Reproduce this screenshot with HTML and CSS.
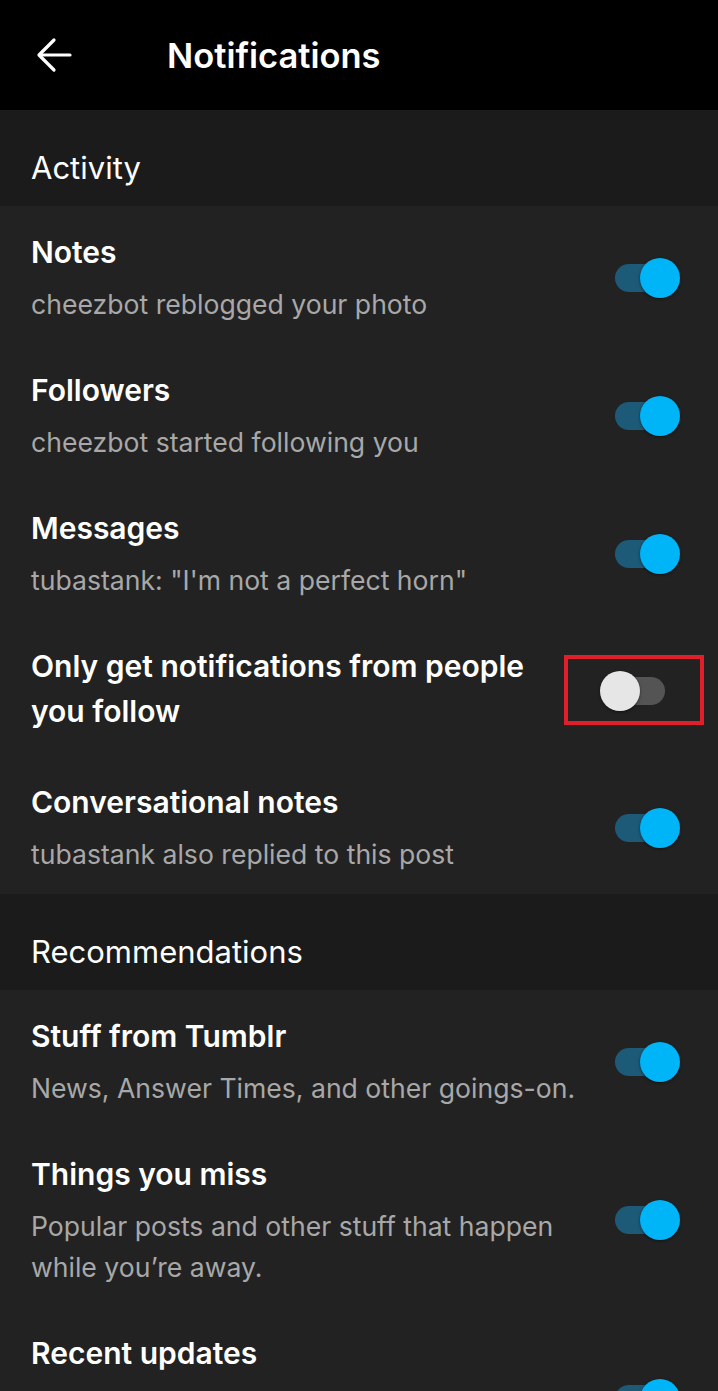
FILE: index.html
```html
<!DOCTYPE html>
<html lang="en">
<head>
  <meta charset="UTF-8">
  <meta name="viewport" content="width=device-width, initial-scale=1.0">
  <title>Notifications</title>
  <link rel="stylesheet" href="styles.css">
</head>
<body>
  <header class="topbar">
    <button class="back-btn" aria-label="Back">
      <svg width="36" height="36" viewBox="0 0 36 36" fill="none" stroke="#fff" stroke-width="3.2" stroke-linecap="round" stroke-linejoin="round">
        <path d="M34 18H4"/>
        <path d="M18 3L3 18l15 15"/>
      </svg>
    </button>
    <h1>Notifications</h1>
  </header>

  <section class="group">
    <h2 class="group-title">Activity</h2>
    <div class="rows">
      <div class="row">
        <div class="row-text">
          <h3>Notes</h3>
          <p>cheezbot reblogged your photo</p>
        </div>
        <span class="switch on"><span class="knob"></span></span>
      </div>
      <div class="row">
        <div class="row-text">
          <h3>Followers</h3>
          <p>cheezbot started following you</p>
        </div>
        <span class="switch on"><span class="knob"></span></span>
      </div>
      <div class="row">
        <div class="row-text">
          <h3>Messages</h3>
          <p>tubastank: "I'm not a perfect horn"</p>
        </div>
        <span class="switch on"><span class="knob"></span></span>
      </div>
      <div class="row">
        <div class="row-text">
          <h3>Only get notifications from people you follow</h3>
        </div>
        <span class="switch"><span class="knob"></span><span class="highlight"></span></span>
      </div>
      <div class="row">
        <div class="row-text">
          <h3>Conversational notes</h3>
          <p>tubastank also replied to this post</p>
        </div>
        <span class="switch on"><span class="knob"></span></span>
      </div>
    </div>
  </section>

  <section class="group">
    <h2 class="group-title">Recommendations</h2>
    <div class="rows">
      <div class="row">
        <div class="row-text">
          <h3>Stuff from Tumblr</h3>
          <p>News, Answer Times, and other goings-on.</p>
        </div>
        <span class="switch on"><span class="knob"></span></span>
      </div>
      <div class="row">
        <div class="row-text">
          <h3>Things you miss</h3>
          <p>Popular posts and other stuff that happen while you’re away.</p>
        </div>
        <span class="switch on"><span class="knob"></span></span>
      </div>
      <div class="row">
        <div class="row-text">
          <h3>Recent updates</h3>
          <p>Posts from blogs you follow and things you might like.</p>
        </div>
        <span class="switch on"><span class="knob"></span></span>
      </div>
    </div>
  </section>
</body>
</html>
```

FILE: styles.css
```css
body {
  margin: 0;
  font-family: Inter, "Noto Sans", sans-serif;
  background: #222;
  color: #fff;
}

.topbar {
  background: #000;
  height: 110px;
  display: flex;
  align-items: center;
}

.back-btn {
  background: none;
  border: none;
  padding: 0;
  margin-left: 36px;
  width: 36px;
  height: 36px;
  display: flex;
}

.topbar h1 {
  margin: 0 0 0 95px;
  font-size: 34.5px;
  font-weight: 600;
}

.group-title {
  margin: 0;
  background: #1b1b1b;
  padding: 40px 31px 20px;
  font-size: 31px;
  line-height: 36px;
  font-weight: 400;
}

.rows {
  background: #222;
}

.row {
  display: flex;
  align-items: center;
  justify-content: space-between;
  padding: 24px 38px 19px 31px;
}

.row-text {
  flex: 1;
  max-width: 545px;
}

.row h3 {
  margin: 0;
  font-size: 30px;
  line-height: 45px;
  font-weight: 600;
}

/* rows with no description line sit a bit taller */
.row h3:only-child {
  margin-bottom: 3px;
}

.row p {
  margin: 9px 0 0;
  font-size: 26.6px;
  line-height: 41px;
  color: #a8a8a8;
}

/* toggle: 50x28 track, 40px knob hanging over both ends */
.switch {
  position: relative;
  flex: none;
  width: 80px;
  height: 40px;
}

.switch::before {
  content: "";
  position: absolute;
  left: 15px;
  top: 6px;
  width: 50px;
  height: 28px;
  border-radius: 14px;
  background: #545454;
}

.switch .knob {
  position: absolute;
  left: 0;
  top: 0;
  width: 40px;
  height: 40px;
  border-radius: 50%;
  background: #e6e6e6;
  box-shadow: 0 1px 3px rgba(0, 0, 0, 0.5);
}

.switch.on::before {
  background: #1d5a78;
}

.switch.on .knob {
  left: 40px;
  background: #00b4f8;
}

.highlight {
  position: absolute;
  top: -16px;
  bottom: -14px;
  left: -36px;
  right: -24px;
  border: 4px solid #e01f2a;
}
```
